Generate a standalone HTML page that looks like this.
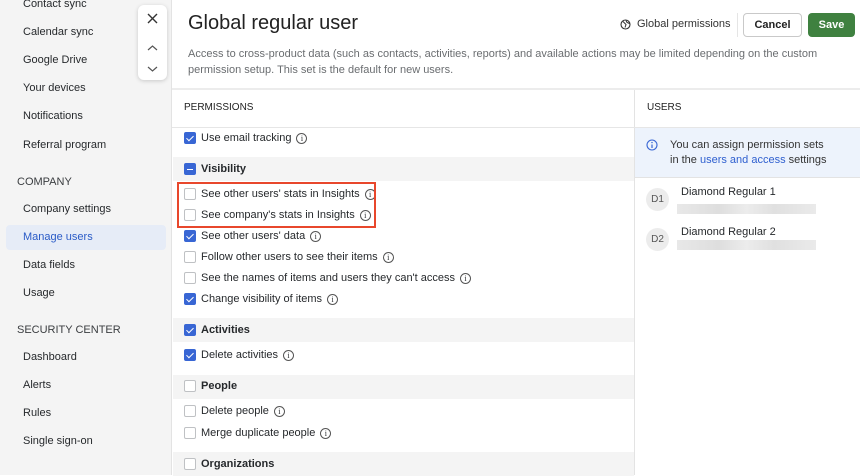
<!DOCTYPE html>
<html><head><meta charset="utf-8"><style>
*{box-sizing:border-box;margin:0;padding:0}
body{width:860px;height:475px;overflow:hidden;font-family:"Liberation Sans",sans-serif;color:#26292c;background:#fff;position:relative;font-size:11px}
.sb{position:absolute;left:0;top:0;width:172px;height:475px;background:#f4f4f4;border-right:1px solid #e3e3e3}
.sb div{position:absolute;left:23px;font-size:11px;color:#26292c}
.sb .h{left:17px;font-size:11px;color:#3a3d40}
.sel{position:absolute;left:6px!important;width:160px;height:25px;background:#e6ecf7;border-radius:4px}
.nav{position:absolute;left:138px;top:5px;width:29px;height:75px;background:#fff;border-radius:6px;box-shadow:0 1px 4px rgba(0,0,0,.18)}
.t{position:absolute;white-space:nowrap}
.hdrline{position:absolute;left:172px;top:88px;width:688px;height:2px;background:#ececec}
.band{position:absolute;left:173px;width:461px;height:24px;background:#f4f4f4}
.cb{position:absolute;left:184px;width:12px;height:12px;border:1px solid #bfc1c4;border-radius:2px;background:#fff}
.cb.on{background:#3866d4;border-color:#3866d4}
.cb.on:after{content:"";position:absolute;left:3px;top:1px;width:3px;height:6px;border:solid #fff;border-width:0 1.5px 1.5px 0;transform:rotate(45deg)}
.cb.ind{background:#3866d4;border-color:#3866d4}
.cb.ind:after{content:"";position:absolute;left:2px;top:4.5px;width:6px;height:1.5px;background:#fff}
.lbl{position:absolute;left:201px;font-size:11px;white-space:nowrap;line-height:14px}
.b{font-weight:bold}
.i{display:inline-block;width:11px;height:11px;border:1px solid #555;border-radius:50%;font-size:8px;line-height:9px;text-align:center;margin-left:5px;vertical-align:-1px;font-family:"Liberation Serif",serif;position:relative;top:-1px}
.blur{position:absolute;left:677px;width:139px;height:10px;background:linear-gradient(90deg,#e8e8e8,#dedede 30%,#ececec 50%,#e0e0e0 70%,#eaeaea)}
.av{position:absolute;left:646px;width:23px;height:23px;border-radius:50%;background:#ececec;font-size:10px;color:#555;text-align:center;line-height:23px}
</style></head><body>
<div class="sb">
<div style="top:-2px">Contact sync</div>
<div style="top:26px">Calendar sync</div>
<div style="top:54px">Google Drive</div>
<div style="top:82px">Your devices</div>
<div style="top:110px">Notifications</div>
<div style="top:139px">Referral program</div>
<div class="h" style="top:176px">COMPANY</div>
<div style="top:203px">Company settings</div>
<div class="sel" style="top:225px"></div>
<div style="top:231px;color:#2a5bc7">Manage users</div>
<div style="top:259px">Data fields</div>
<div style="top:287px">Usage</div>
<div class="h" style="top:324px">SECURITY CENTER</div>
<div style="top:351px">Dashboard</div>
<div style="top:379px">Alerts</div>
<div style="top:407px">Rules</div>
<div style="top:435px">Single sign-on</div>
</div>
<div class="nav"><svg width="29" height="75"><path d="M10 9l9 9M19 9l-9 9" stroke="#333" stroke-width="1.4" fill="none"/><path d="M10 45l4.5-4 4.5 4" stroke="#555" stroke-width="1.2" fill="none"/><path d="M10 62l4.5 4 4.5-4" stroke="#555" stroke-width="1.2" fill="none"/></svg></div>
<div class="t" style="left:188px;top:12px;font-size:20px;color:#222">Global regular user</div>
<div class="t" style="left:188px;top:46px;font-size:11px;color:#6a6d70;line-height:16px">Access to cross-product data (such as contacts, activities, reports) and available actions may be limited depending on the custom<br>permission setup. This set is the default for new users.</div>
<svg style="position:absolute;left:620px;top:19px" width="11" height="11"><circle cx="5.5" cy="5.5" r="4.5" stroke="#333" fill="none" stroke-width="1.1"/><path d="M3 2.5l3 3-1 3M6 1.5l1 2 2.5 1" stroke="#333" fill="none" stroke-width="1"/></svg>
<div class="t" style="left:637px;top:18px;font-size:11px;color:#333">Global permissions</div>
<div style="position:absolute;left:737px;top:13px;width:1px;height:24px;background:#e5e5e5"></div>
<div style="position:absolute;left:743px;top:13px;width:59px;height:24px;border:1px solid #c9c9c9;border-radius:4px;text-align:center;line-height:22px;font-size:11px;font-weight:bold;color:#222">Cancel</div>
<div style="position:absolute;left:808px;top:13px;width:47px;height:24px;background:#3f8140;border-radius:4px;text-align:center;line-height:24px;font-size:11px;font-weight:bold;color:#fff">Save</div>
<div class="hdrline"></div>
<div style="position:absolute;left:634px;top:90px;width:1px;height:385px;background:#e3e3e3"></div>
<div style="position:absolute;left:172px;top:127px;width:688px;height:1px;background:#e6e6e6"></div>
<div class="t" style="left:184px;top:102px;font-size:10px;color:#222">PERMISSIONS</div>
<div class="t" style="left:647px;top:102px;font-size:10px;color:#222">USERS</div>
<div style="position:absolute;left:635px;top:128px;width:225px;height:50px;background:#edf3fc;border-bottom:1px solid #e3e3e3"></div>
<svg style="position:absolute;left:646px;top:139px" width="12" height="12"><circle cx="6" cy="6" r="5" stroke="#3866d4" fill="none" stroke-width="1.1"/><path d="M6 5.5v3.5" stroke="#3866d4" stroke-width="1.2"/><circle cx="6" cy="3.6" r=".7" fill="#3866d4"/></svg>
<div class="t" style="left:670px;top:138px;font-size:11px;line-height:15px;color:#333">You can assign permission sets<br>in the <span style="color:#2e5fcf">users and access</span> settings</div>
<div class="av" style="top:188px">D1</div><div class="t" style="left:681px;top:186px;font-size:11px">Diamond Regular 1</div><div class="blur" style="top:204px"></div>
<div class="av" style="top:228px">D2</div><div class="t" style="left:681px;top:226px;font-size:11px">Diamond Regular 2</div><div class="blur" style="top:240px"></div>

<div class="band" style="top:157px"></div>
<div class="band" style="top:318px"></div>
<div class="band" style="top:375px"></div>
<div class="band" style="top:452px"></div>

<div class="cb on" style="top:132px"></div><div class="lbl" style="top:131px">Use email tracking<span class="i">i</span></div>
<div class="cb ind" style="top:163px"></div><div class="lbl b" style="top:162px">Visibility</div>
<div class="cb" style="top:188px"></div><div class="lbl" style="top:187px">See other users' stats in Insights<span class="i">i</span></div>
<div class="cb" style="top:209px"></div><div class="lbl" style="top:208px">See company's stats in Insights<span class="i">i</span></div>
<div class="cb on" style="top:230px"></div><div class="lbl" style="top:229px">See other users' data<span class="i">i</span></div>
<div class="cb" style="top:251px"></div><div class="lbl" style="top:250px">Follow other users to see their items<span class="i">i</span></div>
<div class="cb" style="top:272px"></div><div class="lbl" style="top:271px">See the names of items and users they can't access<span class="i">i</span></div>
<div class="cb on" style="top:293px"></div><div class="lbl" style="top:292px">Change visibility of items<span class="i">i</span></div>
<div class="cb on" style="top:324px"></div><div class="lbl b" style="top:323px">Activities</div>
<div class="cb on" style="top:349px"></div><div class="lbl" style="top:348px">Delete activities<span class="i">i</span></div>
<div class="cb" style="top:380px"></div><div class="lbl b" style="top:379px">People</div>
<div class="cb" style="top:405px"></div><div class="lbl" style="top:404px">Delete people<span class="i">i</span></div>
<div class="cb" style="top:427px"></div><div class="lbl" style="top:426px">Merge duplicate people<span class="i">i</span></div>
<div class="cb" style="top:458px"></div><div class="lbl b" style="top:457px">Organizations</div>
<div style="position:absolute;left:177px;top:182px;width:199px;height:46px;border:2px solid #e8472c"></div>
</body></html>
